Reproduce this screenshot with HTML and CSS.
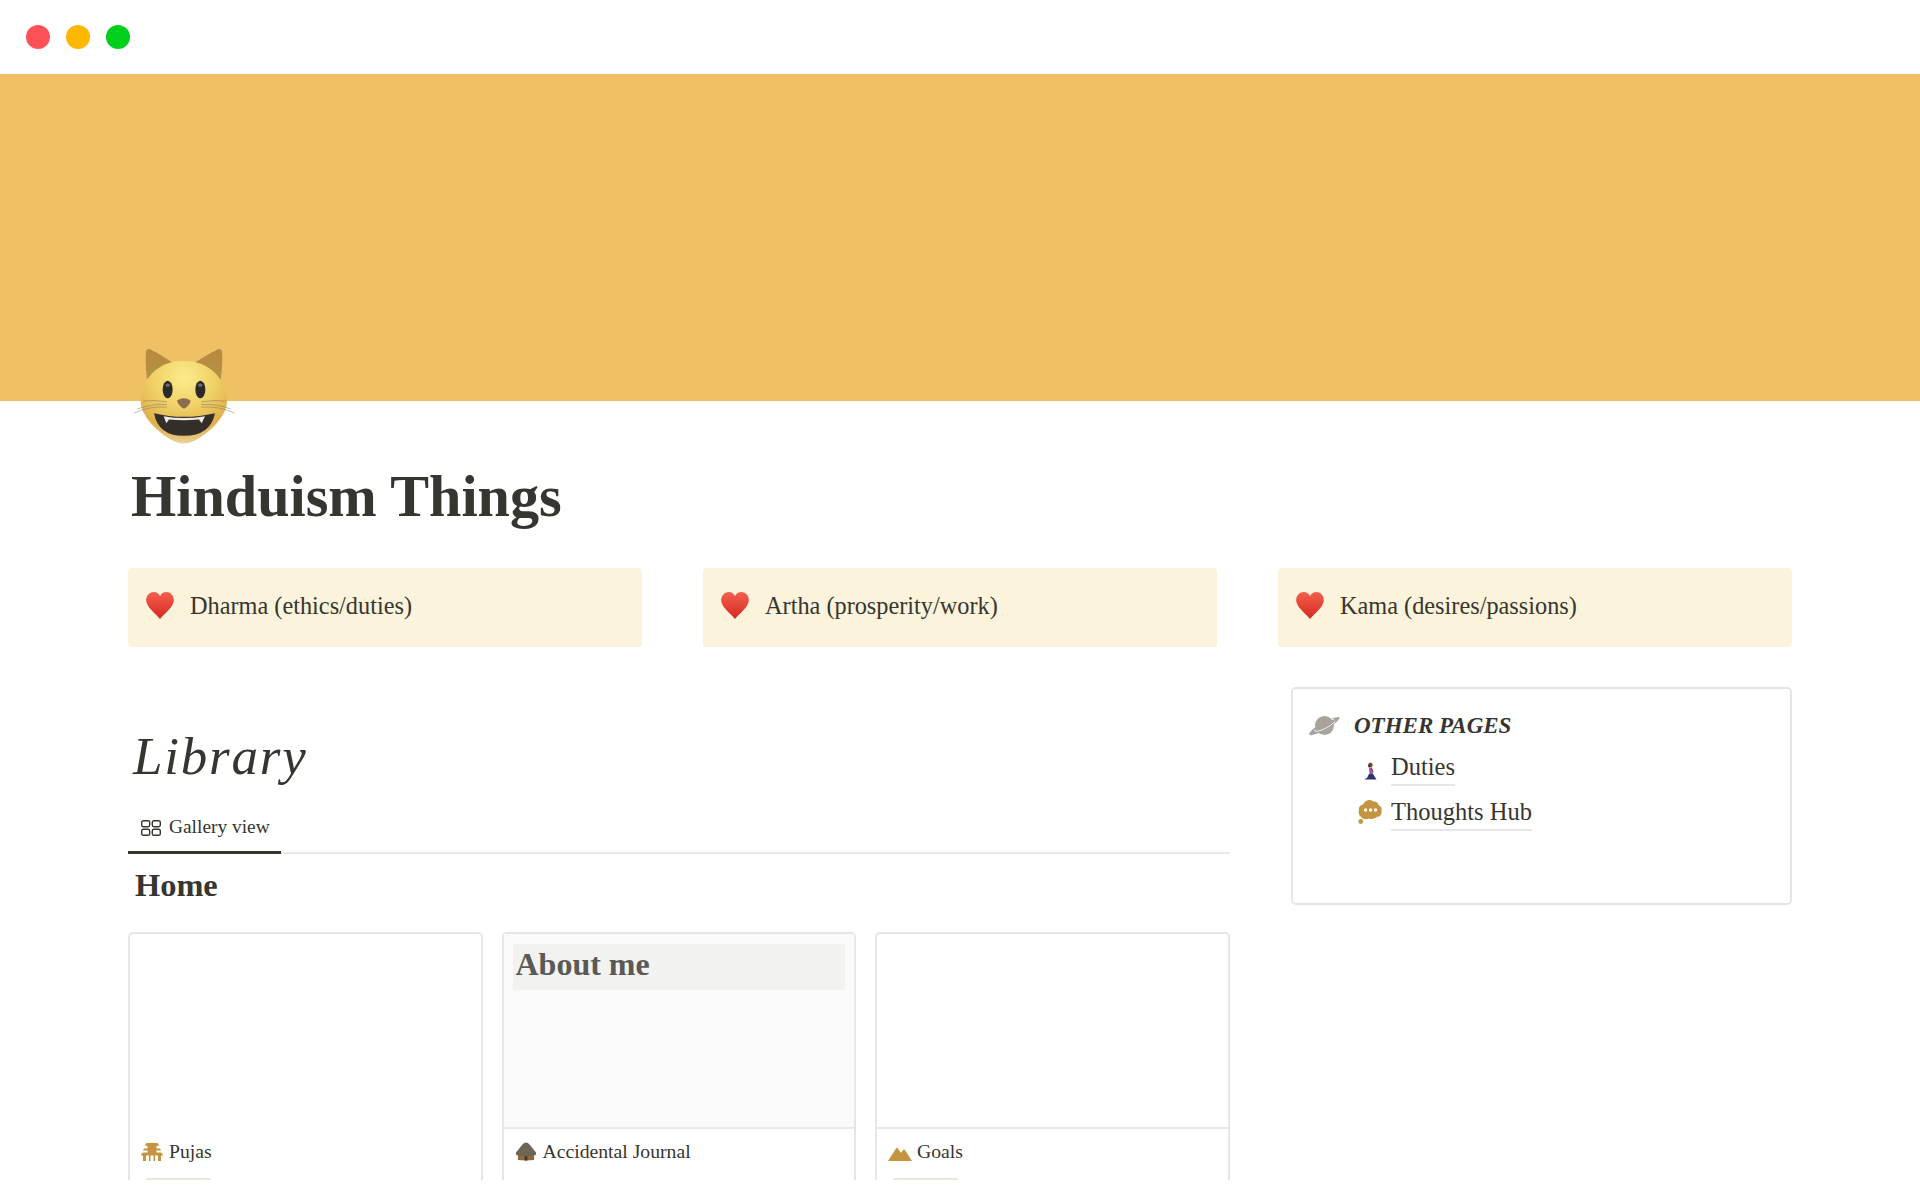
FILE: index.html
```html
<!DOCTYPE html>
<html lang="en">
<head>
  <meta charset="UTF-8">
  <title>Hinduism Things</title>
  <link rel="stylesheet" href="styles.css">
</head>
<body>
  <div class="page">
    <div class="topbar">
      <span class="dot dot-red"></span>
      <span class="dot dot-yellow"></span>
      <span class="dot dot-green"></span>
    </div>
    <div class="banner"></div>

    <div class="content">
      <svg class="page-icon" viewBox="70 55 306 290" aria-hidden="true">
        <defs>
          <radialGradient id="catFace" cx="50%" cy="20%" r="82%">
            <stop offset="0" stop-color="#fcec8c"/>
            <stop offset="0.45" stop-color="#f0d066"/>
            <stop offset="0.8" stop-color="#deb04c"/>
            <stop offset="1" stop-color="#efd9ae"/>
          </radialGradient>
          <linearGradient id="catEar" x1="0" y1="0" x2="0" y2="1">
            <stop offset="0" stop-color="#b8893f"/>
            <stop offset="1" stop-color="#b39343"/>
          </linearGradient>
        </defs>
        <path d="M112 150 Q106 100 109 68 Q111 53 124 60 Q160 78 205 110 Z" fill="url(#catEar)"/>
        <path d="M333 150 Q340 100 337 68 Q335 53 322 60 Q286 78 245 106 Z" fill="url(#catEar)"/>
        <path d="M222 93 C300 93 352 150 352 215 C352 268 268 341 222 341 C176 341 93 268 93 215 C93 150 144 93 222 93 Z" fill="url(#catFace)"/>
        <ellipse cx="174" cy="179" rx="15" ry="26" fill="#2c2a28"/>
        <ellipse cx="272" cy="179" rx="15" ry="26" fill="#2c2a28"/>
        <ellipse cx="174" cy="166" rx="6" ry="5" fill="#6d7276"/>
        <ellipse cx="272" cy="166" rx="6" ry="5" fill="#6d7276"/>
        <path d="M202 212 Q222 199 243 212 Q240 228 223 237 Q206 228 202 212 Z" fill="#8b6c50"/>
        <path d="M172 216 Q130 209 100 214 M172 224 Q122 222 82 238 M172 232 Q120 228 72 250 M275 216 Q318 209 350 214 M275 224 Q326 222 364 238 M275 232 Q328 228 375 250" fill="none" stroke="#6d6759" stroke-width="1.300"/>
        <path d="M133 250 Q222 272 316 250 Q302 318 222 318 Q146 318 133 250 Z" fill="#332e2a"/>
        <path d="M162 259 Q222 270 286 259 L276 280 L268 269 Q222 274 178 269 L170 280 Z" fill="#efeae2"/>
      </svg>

      <h1 class="title">Hinduism Things</h1>

      <div class="callouts">
        <div class="callout">
          <svg class="heart" viewBox="108 780 84 82" aria-hidden="true"><use href="#heartShape"/></svg>
          <span>Dharma (ethics/duties)</span>
        </div>
        <div class="callout">
          <svg class="heart" viewBox="108 780 84 82" aria-hidden="true"><use href="#heartShape"/></svg>
          <span>Artha (prosperity/work)</span>
        </div>
        <div class="callout">
          <svg class="heart" viewBox="108 780 84 82" aria-hidden="true"><use href="#heartShape"/></svg>
          <span>Kama (desires/passions)</span>
        </div>
      </div>

      <div class="lower">
        <div class="library">
          <h2 class="library-title">Library</h2>
          <div class="tabs">
            <div class="tab">
              <svg class="tab-icon" viewBox="0 0 20 16" aria-hidden="true">
                <rect x="0.7" y="0.7" width="8" height="6" rx="1.6"/>
                <rect x="11.3" y="0.7" width="8" height="6" rx="1.6"/>
                <rect x="0.7" y="9.3" width="8" height="6" rx="1.6"/>
                <rect x="11.3" y="9.3" width="8" height="6" rx="1.6"/>
              </svg>
              <span>Gallery view</span>
            </div>
          </div>
          <h3 class="group-title">Home</h3>

          <div class="gallery">
            <div class="card">
              <div class="cover cover-blank"></div>
              <div class="card-name">
                <svg class="card-icon" viewBox="0 0 22 19" aria-hidden="true">
                  <path d="M5.500 1H16.500L18 4H15.500V6.500H19L20 8.500H15.500V10.500H20L22 12.500V13.500H20V19H17V13.500H14V19H12.500V13.500H9.500V19H8V13.500H5V19H2V13.500H0V12.500L2 10.500H6.500V8.500H2L3 6.500H6.500V4H4Z" fill="#c59441"/>
                </svg>
                <span>Pujas</span>
              </div>
              <div class="chip"></div>
            </div>
            <div class="card">
              <div class="cover cover-about">
                <div class="about-box">About me</div>
              </div>
              <div class="card-name">
                <svg class="card-icon" viewBox="0 0 22 20" aria-hidden="true">
                  <path d="M2.500 13H19.500V19Q11 20 2.500 19Z" fill="#8d6a3c"/>
                  <path d="M9.500 15H12.500V19.500H9.500Z" fill="#4a3626"/>
                  <path d="M11 0.500Q13 0.500 15 3L21.500 11Q22 14 20 14Q11 15.500 2 14Q0 14 0.500 11L7 3Q9 0.500 11 0.500Z" fill="#6f6557"/>
                </svg>
                <span>Accidental Journal</span>
              </div>
              <div class="chip chip-hidden"></div>
            </div>
            <div class="card">
              <div class="cover"></div>
              <div class="card-name">
                <svg class="card-icon card-icon-wide" viewBox="0 0 24 14" aria-hidden="true">
                  <path d="M0 14L8 1.500Q9 0 10 1.500L13 6L15 3Q16 2 17 3L24 14Z" fill="#c59441"/>
                </svg>
                <span>Goals</span>
              </div>
              <div class="chip"></div>
            </div>
          </div>
        </div>

        <aside class="side-panel">
          <div class="side-head">
            <svg class="planet" viewBox="0 0 31 20" aria-hidden="true">
              <circle cx="15.500" cy="9.500" r="9.500" fill="#a8a49c"/>
              <path d="M22 3Q28 0.500 30.500 1Q31.500 3 25 8Q16 15.500 5 18.500Q0 20 0.200 18Q0.500 15.500 6 11.500" fill="#a8a49c"/>
              <path d="M22.500 3.500Q25 3 25.500 4M6 13.500Q5 15.500 7 15.500Q17 14 26 5.500" fill="none" stroke="#fff" stroke-width="0.800"/>
            </svg>
            <span>OTHER PAGES</span>
          </div>
          <div class="side-link">
            <svg class="side-icon" viewBox="0 0 24 24" aria-hidden="true">
              <circle cx="12.500" cy="8" r="2.200" fill="#6b4530"/>
              <path d="M10.500 7Q9.500 9.500 11 11L12 9Z" fill="#3e2a20"/>
              <path d="M11 10.500H14L15 17H11.500Z" fill="#a84fb0"/>
              <path d="M14 11L15.500 15L14.500 15.500L13 12Z" fill="#7a5038"/>
              <path d="M11 17H15L18.500 22.500H6.500Q8 21 9 21Z" fill="#28376e"/>
            </svg>
            <a class="side-text">Duties</a>
          </div>
          <div class="side-link">
            <svg class="side-icon side-icon-high" viewBox="0 0 24 24" aria-hidden="true">
              <path d="M8 1Q12 -1 15 1.500Q19.500 1 20.500 5Q24.500 7 23.500 11.500Q24 16.500 19 17Q15 20 11 18.500Q6 20.500 3.500 17.500Q-0.500 14.500 1 10Q0.500 5.500 5 4.500Q6 2 8 1Z" fill="#c59441"/>
              <circle cx="2.800" cy="21.500" r="2.400" fill="#c59441"/>
              <circle cx="7.500" cy="10" r="1.700" fill="#fff"/>
              <circle cx="12.500" cy="10" r="1.700" fill="#fff"/>
              <circle cx="17.500" cy="10" r="1.700" fill="#fff"/>
            </svg>
            <a class="side-text">Thoughts Hub</a>
          </div>
        </aside>
      </div>
    </div>
  </div>

  <svg class="defs-only" aria-hidden="true">
    <defs>
      <linearGradient id="heartFill" x1="0" y1="0" x2="0" y2="1">
        <stop offset="0" stop-color="#f4604f"/>
        <stop offset="1" stop-color="#d5281f"/>
      </linearGradient>
      <path id="heartShape" d="M150 862 C140 848 108 826 108 805 C108 790 120 780 131 780 C140 780 147 785 150 793 C153 785 160 780 169 780 C181 780 192 790 192 805 C192 826 160 848 150 862 Z" fill="url(#heartFill)"/>
    </defs>
  </svg>
</body>
</html>
```

FILE: styles.css
```css
body {
  margin: 0;
  background: #fff;
  color: #37352f;
  font-family: "Liberation Serif", serif;
}
.page {
  height: 1180px;
  overflow: hidden;
}
.defs-only {
  width: 0;
  height: 0;
  display: block;
}

/* window bar */
.topbar {
  height: 74px;
  padding-left: 26px;
  display: flex;
  align-items: center;
  gap: 16px;
}
.dot {
  width: 24px;
  height: 24px;
  border-radius: 50%;
}
.dot-red { background: #ff5157; }
.dot-yellow { background: #ffb700; }
.dot-green { background: #00cf1b; }

.banner {
  height: 327px;
  background: #f0c065;
}

.content {
  padding: 0 128px;
}
.page-icon {
  display: block;
  width: 102px;
  height: 97px;
  margin: -53px 0 0 5px;
}
.title {
  margin: 19px 0 0 3px;
  font-size: 58.2px;
  line-height: 66px;
  font-weight: 700;
}

/* callouts */
.callouts {
  display: grid;
  grid-template-columns: repeat(3, 514px);
  gap: 61px;
  margin-top: 38px;
}
.callout {
  height: 79px;
  padding-left: 18px;
  display: flex;
  align-items: center;
  gap: 16px;
  background: #fbf3db;
  border-radius: 4px;
  font-size: 24.3px;
}
.callout span {
  margin-bottom: 4px;
}
.heart {
  width: 28px;
  height: 27px;
  margin-top: -5px;
}

/* two columns below the callouts */
.lower {
  display: flex;
  gap: 61px;
  margin-top: 40px;
  align-items: flex-start;
}
.library {
  width: 1102px;
  padding-top: 39px;
}
.library-title {
  margin: 0 0 0 5px;
  font-size: 53px;
  line-height: 60px;
  font-weight: 400;
  font-style: italic;
  letter-spacing: 1.8px;
}
.tabs {
  margin-top: 26px;
  border-bottom: 2px solid #e9e9e7;
}
.tab {
  width: 153px;
  height: 42px;
  margin-bottom: -2px;
  padding: 0 0 9px 13px;
  box-sizing: border-box;
  display: flex;
  align-items: center;
  gap: 8px;
  border-bottom: 3px solid #37352f;
  font-size: 19.4px;
}
.tab-icon {
  width: 20px;
  height: 16px;
  margin-top: 2px;
  fill: none;
  stroke: #37352f;
  stroke-width: 1.4;
}
.group-title {
  margin: 13px 0 0 7px;
  font-size: 32.4px;
  line-height: 36px;
  font-weight: 700;
}

/* gallery cards */
.gallery {
  display: grid;
  grid-template-columns: repeat(3, 354.5px);
  gap: 19px;
  margin-top: 29px;
}
.card {
  border: 2px solid #e6e6e4;
  border-radius: 5px;
  height: 320px;
  box-sizing: border-box;
}
.cover {
  height: 195px;
  border-bottom: 2px solid #e9e9e7;
  box-sizing: border-box;
}
.cover-blank {
  border-bottom-color: transparent;
}
.cover-about {
  padding: 10px 9px 0;
  background: #fafafa;
}
.about-box {
  height: 46px;
  padding-left: 3px;
  background: #f2f2f0;
  color: #5a5a55;
  font-size: 32px;
  line-height: 41px;
  font-weight: 700;
}
.card-name {
  height: 45px;
  padding-left: 11px;
  display: flex;
  align-items: center;
  gap: 6px;
  font-size: 19.7px;
}
.card-icon {
  width: 22px;
  height: 19px;
}
.card-icon-wide {
  width: 24px;
  height: 14px;
  margin: 4px -1px 0 0;
}
.chip {
  width: 67px;
  height: 24px;
  margin: 4px 0 0 15px;
  background: #eee5da;
  border-radius: 3px;
}
.chip-hidden {
  visibility: hidden;
}

/* other pages box */
.side-panel {
  width: 501px;
  height: 218px;
  box-sizing: border-box;
  padding: 21px 16px 0;
  border: 2px solid #e5e5e3;
  border-radius: 5px;
}
.side-head {
  height: 32px;
  display: flex;
  align-items: center;
  gap: 14px;
  font-size: 23px;
  font-weight: 700;
  font-style: italic;
}
.planet {
  width: 31px;
  height: 20px;
}
.side-link {
  margin: 11px 0 0 49px;
  display: flex;
  align-items: flex-start;
  gap: 9px;
}
.side-link + .side-link {
  margin-top: 12px;
}
.side-icon {
  width: 24px;
  height: 24px;
  margin-top: 4px;
}
.side-icon-high {
  margin-top: 2px;
}
.side-text {
  font-size: 24.5px;
  line-height: 28px;
  padding-bottom: 3px;
  border-bottom: 2px solid #e6e6e4;
}
```
